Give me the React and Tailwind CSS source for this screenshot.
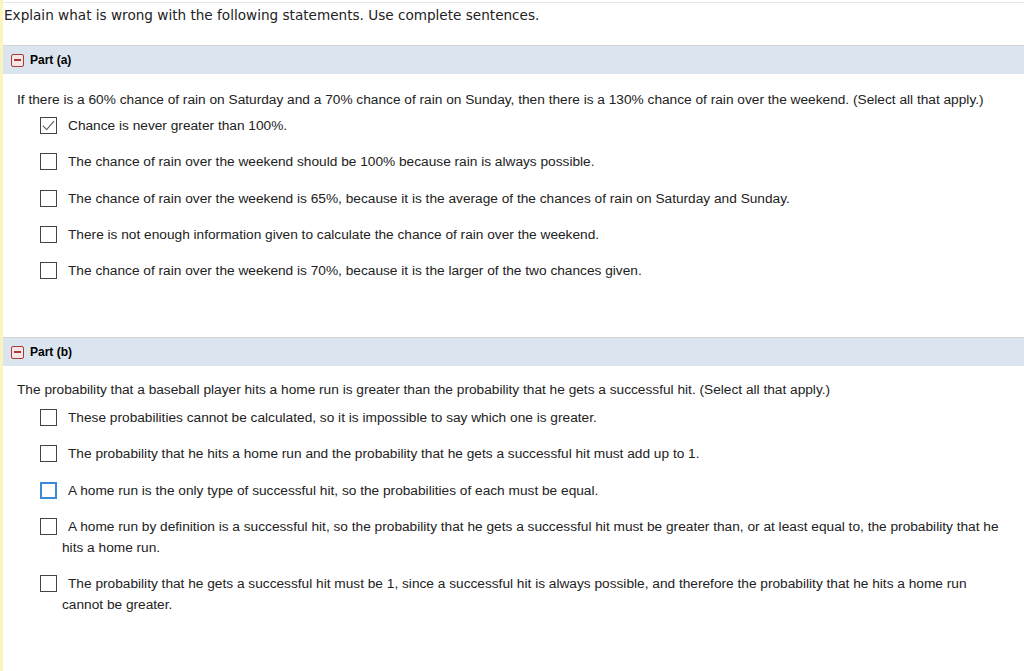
import React from "react";

function MinusIcon() {
  return (
    <span className="inline-flex h-[13px] w-[13px] items-center justify-center rounded-[2px] border border-[#a83a3a] bg-[#f7e6e6]">
      <span className="block h-[1.5px] w-[7px] bg-[#a83a3a]" />
    </span>
  );
}

function Box({ checked, focus }) {
  return (
    <span
      className={
        "relative inline-block h-[17px] w-[17px] align-[-4px] bg-white " +
        (focus ? "border-2 border-[#3a8ad8]" : "border border-[#444]")
      }
    >
      {checked && (
        <svg viewBox="0 0 16 16" className="absolute left-[-1px] top-[-1px] h-[17px] w-[17px]">
          <path d="M2.8 8.3 L6.3 11.8 L13.2 3.8" fill="none" stroke="#555" strokeWidth="1" />
        </svg>
      )}
    </span>
  );
}

function Option({ text, checked, focus }) {
  return (
    <div className="pl-[59px] -indent-[22px] leading-[21px] text-[13.7px] text-[#222] pr-4">
      <Box checked={checked} focus={focus} />
      <span className="ml-[11px] indent-0">{text}</span>
    </div>
  );
}

function PartHeader({ label }) {
  return (
    <div className="flex h-[29px] items-center gap-[6px] border-t border-[#d4d4d4] bg-[#dbe5ef] pl-[8px]">
      <MinusIcon />
      <span className="text-[12px] font-bold text-black" style={{ fontFamily: '"Liberation Sans", Arial, sans-serif' }}>
        {label}
      </span>
    </div>
  );
}

export default function App() {
  const a = [
    { t: "Chance is never greater than 100%.", c: true },
    { t: "The chance of rain over the weekend should be 100% because rain is always possible." },
    { t: "The chance of rain over the weekend is 65%, because it is the average of the chances of rain on Saturday and Sunday." },
    { t: "There is not enough information given to calculate the chance of rain over the weekend." },
    { t: "The chance of rain over the weekend is 70%, because it is the larger of the two chances given." },
  ];
  const b = [
    { t: "These probabilities cannot be calculated, so it is impossible to say which one is greater." },
    { t: "The probability that he hits a home run and the probability that he gets a successful hit must add up to 1." },
    { t: "A home run is the only type of successful hit, so the probabilities of each must be equal.", f: true },
    { t: "A home run by definition is a successful hit, so the probability that he gets a successful hit must be greater than, or at least equal to, the probability that he hits a home run." },
    { t: "The probability that he gets a successful hit must be 1, since a successful hit is always possible, and therefore the probability that he hits a home run cannot be greater." },
  ];
  return (
    <div className="min-h-[671px] w-[1024px] bg-white" style={{ fontFamily: '"Liberation Sans", Arial, sans-serif' }}>
      <div className="flex min-h-[671px] border-l-[3px] border-[#fbf4bf]">
        <div className="flex-1">
          <div className="mt-[2px] border-t border-[#e6e6e6]" />
          <div
            className="pl-[1px] pt-[2px] h-[42px] text-[13.6px] leading-[20px] text-[#222]"
            style={{ fontFamily: '"DejaVu Sans", Verdana, sans-serif' }}
          >
            Explain what is wrong with the following statements. Use complete sentences.
          </div>
          <PartHeader label="Part (a)" />
          <div className="pl-[14px] pt-[15px] text-[13.7px] leading-[21px] text-[#222]">
            If there is a 60% chance of rain on Saturday and a 70% chance of rain on Sunday, then there is a 130% chance of rain over the weekend. (Select all that apply.)
          </div>
          <div className="mt-[5px] flex flex-col gap-[15.25px]">
            {a.map((o, i) => (
              <Option key={i} text={o.t} checked={o.c} />
            ))}
          </div>
          <div className="h-[56px]" />
          <PartHeader label="Part (b)" />
          <div className="pl-[14px] pt-[13px] text-[13.7px] leading-[21px] text-[#222]">
            The probability that a baseball player hits a home run is greater than the probability that he gets a successful hit. (Select all that apply.)
          </div>
          <div className="mt-[7px] flex flex-col gap-[15.25px]">
            {b.map((o, i) => (
              <Option key={i} text={o.t} focus={o.f} />
            ))}
          </div>
        </div>
      </div>
    </div>
  );
}
